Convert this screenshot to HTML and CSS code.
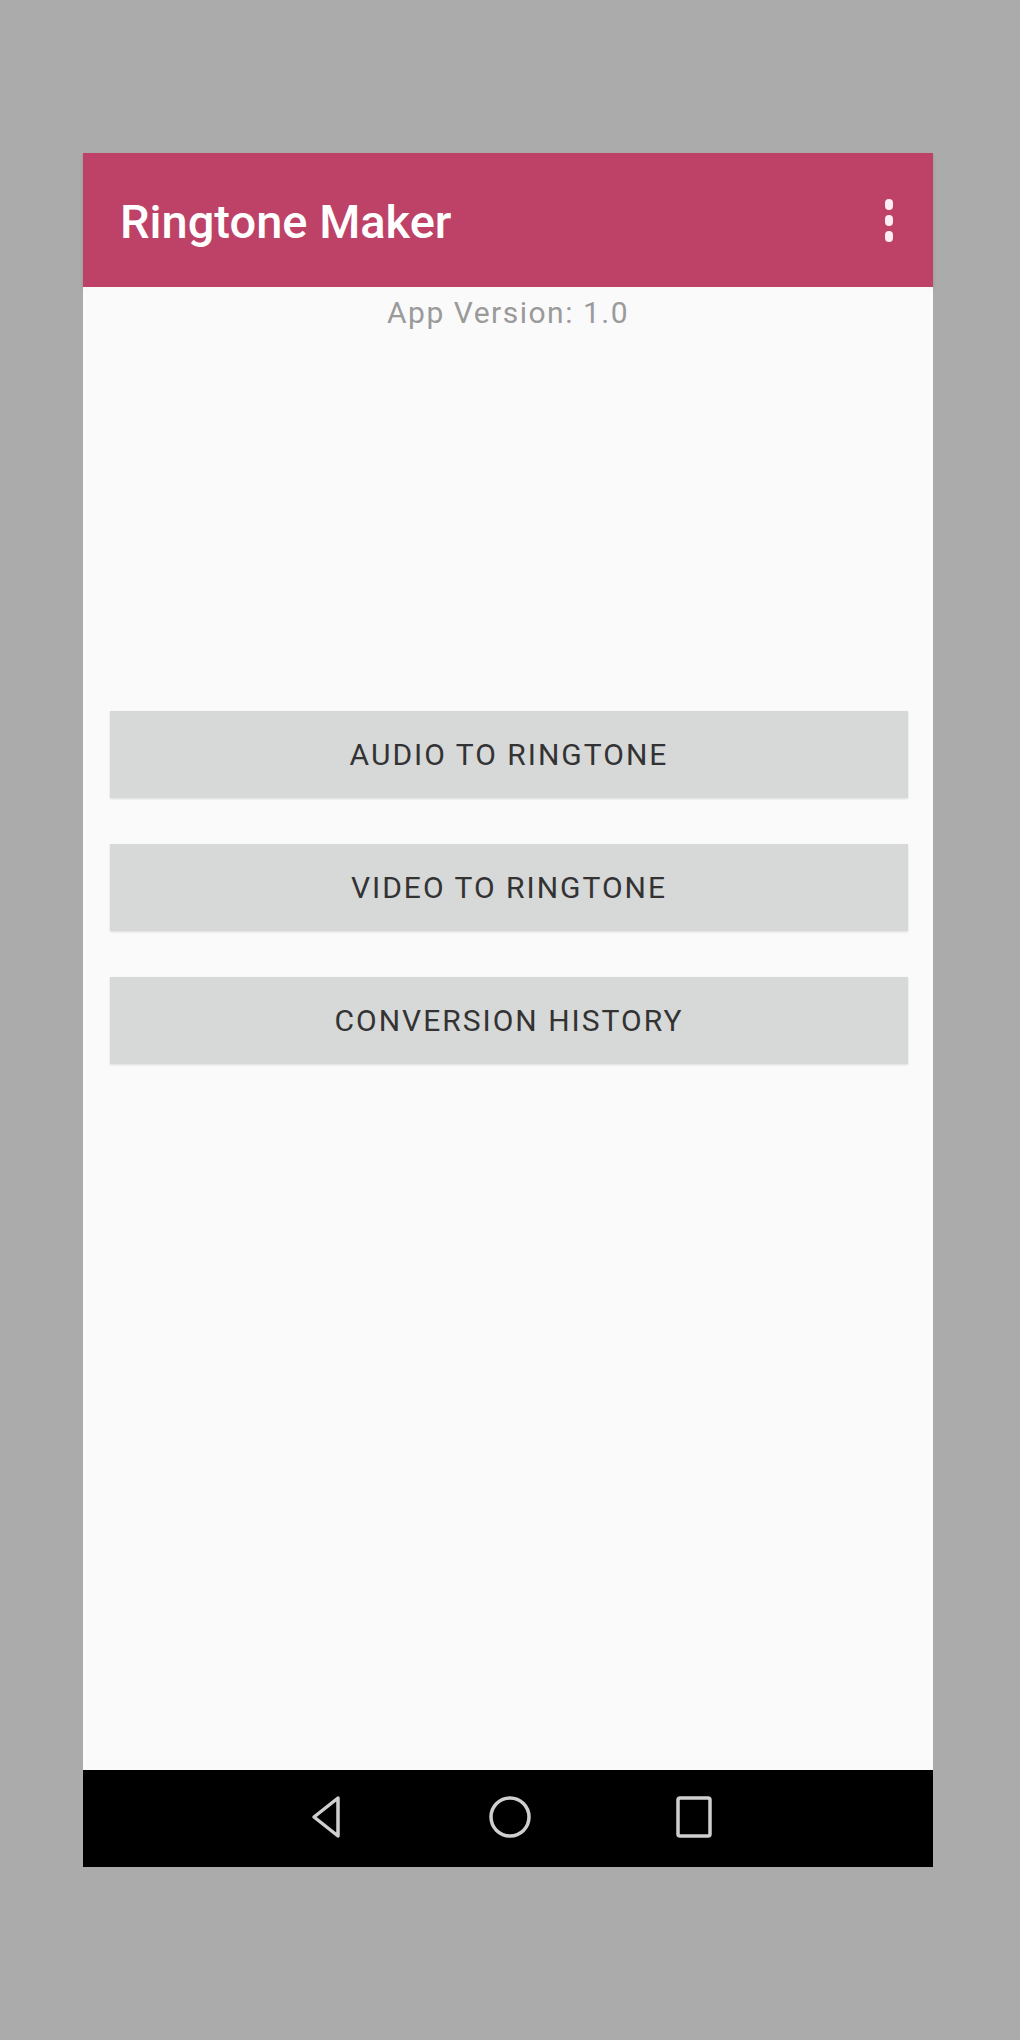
FILE: index.html
```html
<!DOCTYPE html>
<html>
<head>
<meta charset="utf-8">
<link rel="stylesheet" href="styles.css">
</head>
<body>
<div class="phone">
  <header class="appbar">
    <span class="title">Ringtone Maker</span>
    <span class="overflow"><i></i><i></i><i></i></span>
  </header>
  <main class="content">
    <div class="version">App Version: 1.0</div>
    <div class="buttons">
      <div class="btn">AUDIO TO RINGTONE</div>
      <div class="btn">VIDEO TO RINGTONE</div>
      <div class="btn">CONVERSION HISTORY</div>
    </div>
  </main>
  <nav class="navbar">
    <svg class="nav-icon" viewBox="0 0 40 46" width="40" height="46"><path d="M32 4 L8 23 L32 42 Z" fill="none" stroke="#cfcfcf" stroke-width="3.5" stroke-linejoin="round"/></svg>
    <svg class="nav-icon" viewBox="0 0 44 46" width="44" height="46"><circle cx="22" cy="23" r="19" fill="none" stroke="#cfcfcf" stroke-width="3.5"/></svg>
    <svg class="nav-icon" viewBox="0 0 40 46" width="40" height="46"><rect x="4" y="4" width="32" height="38" rx="2" fill="none" stroke="#cfcfcf" stroke-width="3.5"/></svg>
  </nav>
</div>
</body>
</html>
```
FILE: styles.css
```css
html, body {
  margin: 0;
  padding: 0;
  background: #ababab;
  font-family: Roboto, "Noto Sans", sans-serif;
}
.phone {
  width: 850px;
  margin: 153px 0 0 83px;
  display: flex;
  flex-direction: column;
}
.appbar {
  height: 134px;
  background: #be4267;
  display: flex;
  align-items: center;
  justify-content: space-between;
  padding: 0 40px 0 37px;
  box-sizing: border-box;
  box-shadow: 0 2px 3px rgba(0,0,0,0.15);
}
.title {
  color: #ffffff;
  font-size: 47px;
  font-weight: 500;
  margin-top: 2px;
}
.overflow {
  display: flex;
  flex-direction: column;
  gap: 5px;
  margin-top: 0;
}
.overflow i {
  display: block;
  width: 8px;
  height: 11px;
  background: #fbeef2;
  border-radius: 4px;
}
.content {
  height: 1483px;
  background: #fafafa;
  display: flex;
  flex-direction: column;
  align-items: stretch;
}
.version {
  text-align: center;
  color: #9a9a9a;
  font-size: 30px;
  letter-spacing: 1.5px;
  line-height: 34px;
  margin-top: 9px;
}
.buttons {
  margin-top: 381px;
  padding: 0 25px 0 27px;
  display: flex;
  flex-direction: column;
  gap: 46px;
}
.btn {
  height: 87px;
  background: #d7d8d8;
  color: #333333;
  display: flex;
  align-items: center;
  justify-content: center;
  font-size: 30px;
  font-weight: 400;
  letter-spacing: 2px;
  box-shadow: 0 1px 2px rgba(0,0,0,0.12);
}
.navbar {
  height: 97px;
  background: #000000;
  display: flex;
  align-items: center;
  justify-content: center;
  gap: 142px;
  padding: 0 0 4px 4px;
  box-sizing: border-box;
}
.nav-icon {
  display: block;
}
```
